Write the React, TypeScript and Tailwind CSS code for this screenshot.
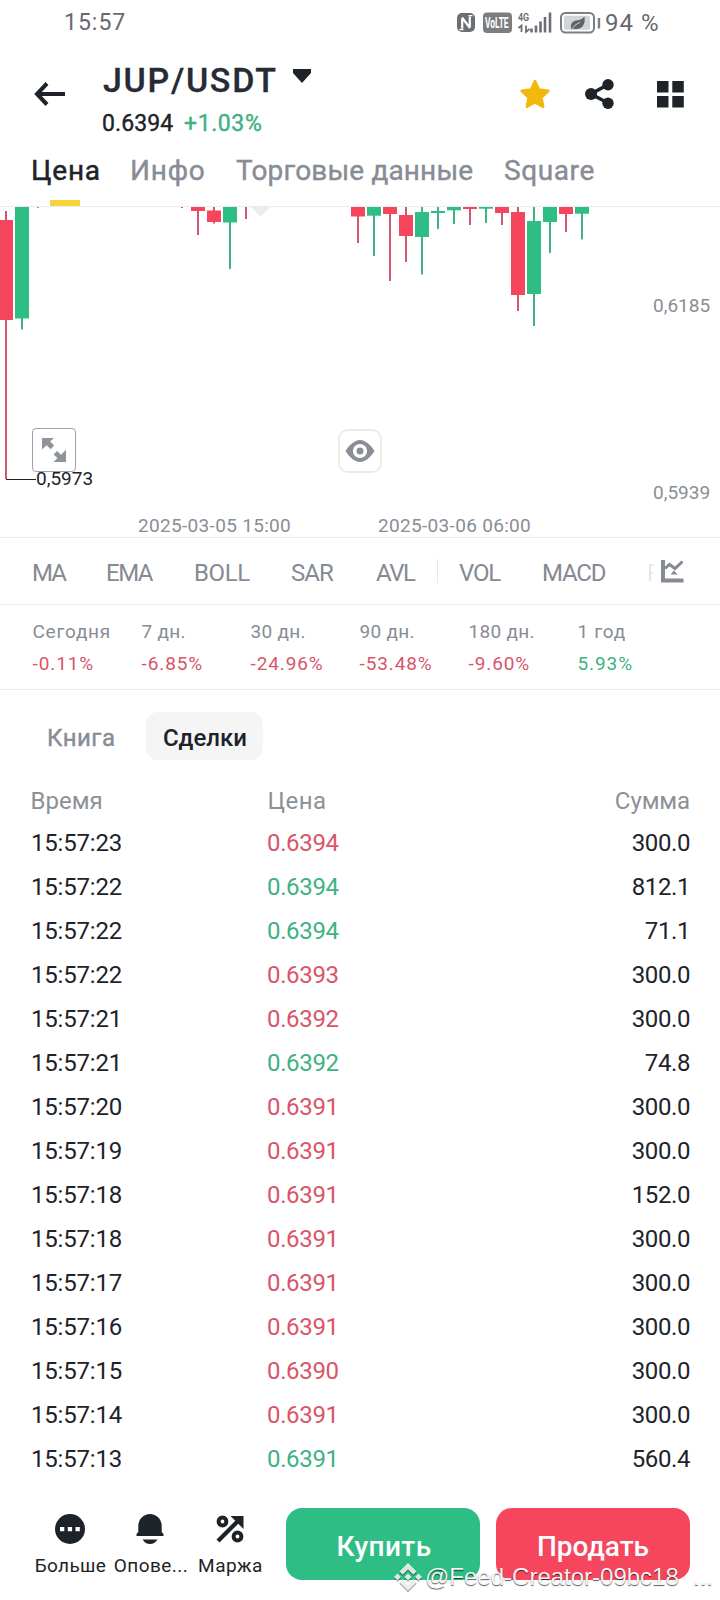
import clsx from 'clsx';

type Candle = { x: number; up: boolean; wick: [number, number]; body?: [number, number] };

// y values are measured from the top edge of the chart
const candles: Candle[] = [
  { x: 6, up: false, wick: [4, 272], body: [13, 113] },
  { x: 22, up: true, wick: [0, 122.5], body: [0, 111.5] },
  { x: 38, up: false, wick: [0, 0.8] },
  { x: 182, up: false, wick: [0, 1] },
  { x: 198, up: false, wick: [0, 28], body: [0, 4] },
  { x: 214, up: false, wick: [0, 16.5], body: [3.5, 15] },
  { x: 230, up: true, wick: [0, 62], body: [0, 15.5] },
  { x: 246, up: false, wick: [0, 12] },
  { x: 358, up: false, wick: [0, 36], body: [0, 9.5] },
  { x: 374, up: true, wick: [0, 49], body: [0, 8.7] },
  { x: 390, up: false, wick: [0, 74], body: [0, 7] },
  { x: 406, up: false, wick: [0, 55], body: [8, 29] },
  { x: 422, up: true, wick: [0, 67.5], body: [5, 30] },
  { x: 438, up: true, wick: [0, 22], body: [4, 6] },
  { x: 454, up: true, wick: [0, 17], body: [0, 3.3] },
  { x: 470, up: false, wick: [0, 18], body: [0, 2] },
  { x: 486, up: true, wick: [0, 16], body: [0, 1.7] },
  { x: 502, up: false, wick: [0, 18], body: [0, 6] },
  { x: 518, up: false, wick: [0, 104], body: [5, 88] },
  { x: 534, up: true, wick: [0, 119], body: [14, 87] },
  { x: 550, up: true, wick: [0, 46], body: [0, 15] },
  { x: 566, up: false, wick: [0, 25], body: [0, 7] },
  { x: 582, up: true, wick: [0, 32.5], body: [0, 6.7] },
];

const periods = [
  { label: 'Сегодня', value: '-0.11%', up: false, labelClass: 'tracking-[0.75px]' },
  { label: '7 дн.', value: '-6.85%', up: false, labelClass: 'tracking-[0.3px]' },
  { label: '30 дн.', value: '-24.96%', up: false, labelClass: 'tracking-[0.3px]' },
  { label: '90 дн.', value: '-53.48%', up: false, labelClass: 'tracking-[0.3px]' },
  { label: '180 дн.', value: '-9.60%', up: false, labelClass: 'tracking-[0.3px]' },
  { label: '1 год', value: '5.93%', up: true, labelClass: 'tracking-[0.7px]' },
];

const trades = [
  { time: '15:57:23', price: '0.6394', amount: '300.0', up: false },
  { time: '15:57:22', price: '0.6394', amount: '812.1', up: true },
  { time: '15:57:22', price: '0.6394', amount: '71.1', up: true },
  { time: '15:57:22', price: '0.6393', amount: '300.0', up: false },
  { time: '15:57:21', price: '0.6392', amount: '300.0', up: false },
  { time: '15:57:21', price: '0.6392', amount: '74.8', up: true },
  { time: '15:57:20', price: '0.6391', amount: '300.0', up: false },
  { time: '15:57:19', price: '0.6391', amount: '300.0', up: false },
  { time: '15:57:18', price: '0.6391', amount: '152.0', up: false },
  { time: '15:57:18', price: '0.6391', amount: '300.0', up: false },
  { time: '15:57:17', price: '0.6391', amount: '300.0', up: false },
  { time: '15:57:16', price: '0.6391', amount: '300.0', up: false },
  { time: '15:57:15', price: '0.6390', amount: '300.0', up: false },
  { time: '15:57:14', price: '0.6391', amount: '300.0', up: false },
  { time: '15:57:13', price: '0.6391', amount: '560.4', up: true },
];

function StatusBar() {
  return (
    <div className="flex h-[45px] items-center text-[23px] leading-none text-[#66696d]">
      <span className="w-[393px] pl-[64px] tracking-[1px]">15:57</span>
      <svg width="146" height="24" viewBox="0 0 146 24" className="ml-[63px] shrink-0">
        {/* nfc */}
        <rect x="1" y="2" width="18" height="19" rx="5" fill="#6b6e72" />
        <path d="M6.2 17.5V7.5M6 6.5L14 17M13.8 16.5V5.5" fill="none" stroke="#fff" strokeWidth="2.2" />
        <path d="M3.5 18.5h4M12.5 4.6h4" stroke="#fff" strokeWidth="1.4" />
        {/* volte */}
        <rect x="27" y="1.5" width="29" height="20.5" rx="4" fill="#7b7e81" />
        <text transform="translate(29 17) scale(0.58 1)" fontSize="14.5" fontWeight="700" fill="#fff">VoLTE</text>
        {/* signal */}
        <text transform="translate(62 10) scale(0.78 1)" fontSize="11.5" fontWeight="600" fill="#66696d">4G</text>
        <path d="M65.5 21v-6.5l-3 2.5M70 14.5V21l3.5-3" fill="none" stroke="#66696d" strokeWidth="1.7" />
        <path d="M75.5 21.5v-4M80 21.5v-7M84.5 21.5v-11M89 21.5V6M94 21.5V1.5" stroke="#6b6e72" strokeWidth="2.6" />
        {/* battery */}
        <rect x="105" y="2" width="33" height="19.5" rx="4.5" fill="#fff" stroke="#7b7e81" strokeWidth="2" />
        <rect x="108" y="4.8" width="26" height="14" rx="1.5" fill="#d3d4d5" />
        <path d="M115.5 19c-2-6 1-9 5-9.5 4-.5 6-1.5 8-4 1 6-1 12-7.5 12.5-2 .2-3-.2-4-.2z" fill="#5f6266" />
        <path d="M115 19.5c2-4 5-6.5 9-8" stroke="#d3d4d5" strokeWidth="1" fill="none" />
        <path d="M143 7v10.5" stroke="#7b7e81" strokeWidth="2.4" />
      </svg>
      <span className="pl-[3px] text-[24px] tracking-[1px]">94 %</span>
    </div>
  );
}

function Header() {
  return (
    <header className="flex h-[98px] pt-[15px] text-[#1e2329]">
      <svg width="32" height="68" viewBox="0 0 32 68" className="ml-[34px] shrink-0">
        <path d="M2.5 34H31M13 23.5L3 34l10 10.5" fill="none" stroke="currentColor" strokeWidth="4" />
      </svg>
      <div className="ml-[37px] w-[417px]">
        <div className="flex h-10 items-center">
          <h1 className="text-[34px] font-medium leading-10 tracking-[1.7px] text-[#262b35] [-webkit-text-stroke:0.3px]">JUP/USDT</h1>
          <svg width="18" height="14" viewBox="0 0 18 14" className="-mt-2 ml-[15px]">
            <path d="M0 0h18v4l-9 10L0 4z" fill="currentColor" />
          </svg>
        </div>
        <p className="-ml-px mt-[12px] flex h-6 items-center text-[23px] leading-6 [-webkit-text-stroke:0.4px]">
          <span className="w-[82px] tracking-[0.1px]">0.6394</span>
          <span className="tracking-[0.6px] text-[#3eb282]">+1.03%</span>
        </p>
      </div>
      <svg width="32" height="68" viewBox="0 0 32 68" className="-ml-px shrink-0">
        <path
          d="M16 21l4 8.6 9.5 1.2-7 6.7 1.7 9.5-8.2-4.6-8.2 4.6 1.7-9.5-7-6.7 9.5-1.2z"
          fill="#f0b90b" stroke="#f0b90b" strokeWidth="2.5" strokeLinejoin="round"
        />
      </svg>
      <svg width="32" height="68" viewBox="0 0 32 68" className="ml-[33px] shrink-0">
        <path d="M24 24.5L7 34l17 9" fill="none" stroke="currentColor" strokeWidth="3.6" />
        <circle cx="7" cy="34" r="6" fill="currentColor" />
        <circle cx="24" cy="24.7" r="5.7" fill="currentColor" />
        <circle cx="24" cy="43.3" r="5.7" fill="currentColor" />
      </svg>
      <svg width="27" height="68" viewBox="0 0 27 68" className="ml-[41px] shrink-0">
        <path d="M0 21h11.5v11.5H0zM15.3 21h11.5v11.5H15.3zM0 36h11.5v11.5H0zM15.3 36h11.5v11.5H15.3z" fill="currentColor" />
      </svg>
    </header>
  );
}

function Tabs() {
  return (
    <nav className="flex h-16 border-b border-[#eaecef] text-[28px] leading-[55px] text-[#878c95] [-webkit-text-stroke:0.4px]">
      <div className="relative ml-[31px] w-[98px] text-[#1e2329] [-webkit-text-stroke:0.5px]">
        <span className="tracking-[0.8px]">Цена</span>
        <span className="absolute bottom-0 left-[19px] h-[6px] w-[30px] bg-[#f8d33a]" />
      </div>
      <span className="w-[107px] pl-px tracking-[0.8px]">Инфо</span>
      <span className="w-[268px] tracking-[0.15px]">Торговые данные</span>
      <span className="tracking-[0.6px]">Square</span>
    </nav>
  );
}

function Chart() {
  return (
    <section className="relative h-[331px] border-b border-[#eaecef] text-[19px] leading-6 text-[#8a8e95]">
      <svg width="720" height="330" viewBox="0 0 720 330" className="block">
        <path d="M250.5 0h20l-10 9.5z" fill="#ececec" />
        {candles.map((c) => (
          <g key={c.x}>
            <rect x={c.x - 1} y={c.wick[0]} width="2" height={c.wick[1] - c.wick[0]} fill={c.up ? '#42b384' : '#cf5a6e'} />
            {c.body && (
              <rect x={c.x - 7} y={c.body[0]} width="14" height={c.body[1] - c.body[0]} fill={c.up ? '#2ebd85' : '#f6465d'} />
            )}
          </g>
        ))}
        <path d="M6 272.5h30" stroke="#1e2329" strokeWidth="1" />
      </svg>
      <span className="absolute left-[653px] top-[87px]">0,6185</span>
      <span className="absolute left-[653px] top-[274px]">0,5939</span>
      <span className="absolute left-[138px] top-[307px] whitespace-nowrap tracking-[0.32px]">2025-03-05 15:00</span>
      <span className="absolute left-[378px] top-[307px] whitespace-nowrap tracking-[0.32px]">2025-03-06 06:00</span>
      <div className="absolute left-8 top-[221px] flex size-11 items-center justify-center rounded border border-[#9aa0a8] bg-white">
        <svg width="26" height="26" viewBox="0 0 26 26" fill="#8f949b">
          <path d="M1 1h12L9.2 4.6l4 4-3.6 3.6-4-4L1 12.5zM25 25H12.5l4-4-4-3.5 3.5-3.5 4 3.8 5-5z" />
        </svg>
      </div>
      <span className="absolute left-[36px] top-[260px] text-[#1e2329]">0,5973</span>
      <div className="absolute left-[338px] top-[222px] flex size-11 items-center justify-center rounded-[10px] border-2 border-[#ebebeb] bg-white">
        <svg width="30" height="24" viewBox="0 0 30 24">
          <path d="M.5 12C5 5 10 1 15 1s10 4 14.5 11C25 19 20 23 15 23S5 19 .5 12z" fill="#8a8f97" />
          <circle cx="15" cy="12" r="5.3" fill="#8a8f97" stroke="#fff" strokeWidth="3.6" />
        </svg>
      </div>
    </section>
  );
}

function Indicators() {
  return (
    <section className="flex h-[67px] items-center border-b border-[#eaecef] text-[24px] leading-6 text-[#858a93]">
      <span className="ml-[32px] w-[74px] pt-[3px] tracking-[-2px]">MA</span>
      <span className="w-[88px] pt-[3px] tracking-[-1.5px]">EMA</span>
      <span className="w-[97px] pt-[3px] tracking-[-0.4px]">BOLL</span>
      <span className="w-[85px] pt-[3px] tracking-[-0.9px]">SAR</span>
      <span className="w-[61px] pt-[3px] tracking-[-1.5px]">AVL</span>
      <span className="h-6 w-px bg-[#e6e8ea]" />
      <span className="ml-[21px] w-[83px] pt-[3px] tracking-[-1.2px]">VOL</span>
      <span className="w-[105px] pt-[3px] tracking-[-1.2px]">MACD</span>
      {/* the next indicator fades out under the settings icon */}
      <span className="w-[14px] bg-linear-to-r from-[#d6d8da] to-white to-65% bg-clip-text pt-[3px] text-transparent">R</span>
      <svg width="23" height="24" viewBox="0 0 23 24" fill="none" stroke="#858a93">
        <path d="M2 1v20.5h20.5" strokeWidth="4" />
        <path d="M4 9.5l4.5-4 5.5 4L21.5 2.5" strokeWidth="3" />
        <path d="M9.5 15.5h7l-3.5-4z" fill="#858a93" stroke="none" />
      </svg>
    </section>
  );
}

function Periods() {
  return (
    <section className="grid h-[85px] grid-cols-[repeat(5,109px)_1fr] border-b border-[#eaecef] pl-[32.5px] pt-[15px] text-[19px]">
      {periods.map((p) => (
        <div key={p.label}>
          <p className={clsx('h-6 leading-6 text-[#878c94]', p.labelClass)}>{p.label}</p>
          <p className={clsx('mt-2 h-6 leading-6 tracking-[0.9px]', p.up ? 'text-[#3eb282]' : 'text-[#d9556a]')}>{p.value}</p>
        </div>
      ))}
    </section>
  );
}

function Trades() {
  return (
    <section className="px-[30px]">
      <div className="flex h-[91px] items-center pt-px text-[24px]">
        <span className="ml-[17px] w-[99px] pt-[3px] tracking-[0.5px] text-[#878c95] [-webkit-text-stroke:0.4px]">Книга</span>
        <span className="h-12 w-[117px] rounded-[12px] bg-[#f5f5f5] pl-px text-center font-medium leading-[52px] text-[#1e2329]">Сделки</span>
      </div>
      <div className="flex h-10 items-center text-[24px] text-[#8c9198]">
        <span className="w-[237.5px] pl-[0.5px]">Время</span>
        <span className="tracking-[0.5px]">Цена</span>
        <span className="ml-auto tracking-[-0.1px]">Сумма</span>
      </div>
      {trades.map((t, i) => (
        <div key={i} className="flex h-11 items-center text-[24px] text-[#1e2329]">
          <span className="w-[237px] pl-px tracking-[-0.2px]">{t.time}</span>
          <span className={clsx('tracking-[-0.35px]', t.up ? 'text-[#3eb282]' : 'text-[#d9556a]')}>{t.price}</span>
          <span className="ml-auto tracking-[-0.4px]">{t.amount}</span>
        </div>
      ))}
    </section>
  );
}

function BottomBar() {
  return (
    <footer className="-mt-px flex h-[120px] pl-[30px] text-[19px] leading-[23px] text-[#1e2329]">
      <div className="flex w-20 flex-col items-center pt-[34px]">
        <svg width="30" height="30" viewBox="0 0 30 30">
          <circle cx="15" cy="15" r="15" fill="currentColor" />
          <path d="M5 13h4.3v4.2H5zM12.8 13h4.3v4.2h-4.3zM20.5 13h4.3v4.2h-4.3z" fill="#fff" />
        </svg>
        <span className="ml-px mt-[10px] tracking-[0.35px]">Больше</span>
      </div>
      <div className="flex w-20 flex-col items-center pt-[34px]">
        <svg width="30" height="30" viewBox="0 0 30 30" fill="currentColor">
          <path d="M3.3 18V12a11.7 12 0 0 1 23.4 0v6l1.8 2v2h-27v-2zM7.5 25.5h15c-2 3-4.5 4.5-7.5 4.5s-5.5-1.5-7.5-4.5z" />
        </svg>
        <span className="ml-[2px] mt-[10px] whitespace-nowrap tracking-[0.45px]">Опове...</span>
      </div>
      <div className="flex w-20 flex-col items-center pt-[34px]">
        <svg width="30" height="30" viewBox="0 0 30 30" fill="none" stroke="currentColor">
          <circle cx="7.5" cy="7.5" r="3.9" strokeWidth="4" />
          <circle cx="22.5" cy="22.5" r="3.9" strokeWidth="4" />
          <path d="M3 27L24 6" strokeWidth="4.2" />
          <path d="M15.5 2H28.5V15z" fill="currentColor" stroke="none" />
        </svg>
        <span className="ml-px mt-[10px] tracking-[0.5px]">Маржа</span>
      </div>
      <div className="ml-4 flex gap-4 pt-7 text-[28px] font-medium text-white">
        <button className="h-[72px] w-[194px] rounded-2xl bg-[#2ebd85] pl-[2px] pt-1 tracking-[0.4px]">Купить</button>
        <button className="h-[72px] w-[194px] rounded-2xl bg-[#f6465d] pt-1">Продать</button>
      </div>
    </footer>
  );
}

function Watermark() {
  return (
    <div className="absolute left-[394px] top-[1561px] flex h-8 items-center font-['Liberation_Sans',sans-serif] text-[24px] text-white/95 [text-shadow:0_1px_1px_rgba(0,0,0,0.65)]">
      <svg width="28" height="30" viewBox="0 0 28 30" className="shrink-0 overflow-visible drop-shadow-[0_1px_0.5px_rgba(0,0,0,0.6)]" fill="#fff" fillOpacity="0.85">
        <path d="M14 1l8.5 8.5-3.2 3.2L14 7.4l-5.3 5.3-3.2-3.2zM14 11.5l3.5 3.5-3.5 3.5-3.5-3.5zM3.5 11.5L7 15l-3.5 3.5L0 15zM24.5 11.5L28 15l-3.5 3.5L21 15zM14 29l-8.5-8.5 3.2-3.2 5.3 5.3 5.3-5.3 3.2 3.2z" />
      </svg>
      <span className="ml-[3px] w-[268px] whitespace-nowrap">@Feed-Creator-09bc18</span>
      <span>...</span>
    </div>
  );
}

export default function App() {
  return (
    <main className="relative h-[1600px] w-[720px] overflow-hidden bg-white font-['Roboto',sans-serif]">
      <StatusBar />
      <Header />
      <Tabs />
      <Chart />
      <Indicators />
      <Periods />
      <Trades />
      <BottomBar />
      <Watermark />
    </main>
  );
}
